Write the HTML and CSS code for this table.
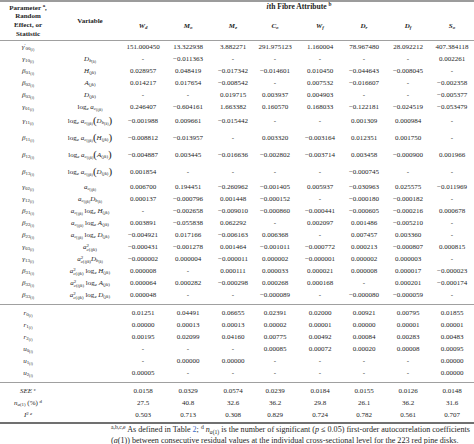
FILE: index.html
```html
<!DOCTYPE html>
<html>
<head>
<meta charset="utf-8">
<link rel="stylesheet" href="styles.css">
</head>
<body>
<table class="tbl">
<colgroup>
<col class="c-par"><col class="c-var"><col class="c-wd"><col class="c-mo"><col class="c-me"><col class="c-co"><col class="c-wf"><col class="c-dr"><col class="c-df"><col class="c-so">
</colgroup>
<thead>
<tr class="h1">
<th rowspan="2" class="hb par-h"><span class="hl">Parameter <sup>a</sup>,</span><span class="hl">Random</span><span class="hl">Effect, or</span><span class="hl">Statistic</span></th>
<th rowspan="2" class="hb">Variable</th>
<th colspan="8" class="grp"><i>i</i>th Fibre Attribute <sup>b</sup></th>
</tr>
<tr class="h2">
<th class="hb"><i>W</i><sub><i>d</i></sub></th>
<th class="hb"><i>M</i><sub><i>o</i></sub></th>
<th class="hb"><i>M</i><sub><i>e</i></sub></th>
<th class="hb"><i>C</i><sub><i>o</i></sub></th>
<th class="hb"><i>W</i><sub><i>f</i></sub></th>
<th class="hb"><i>D</i><sub><i>r</i></sub></th>
<th class="hb"><i>D</i><sub><i>f</i></sub></th>
<th class="hb"><i>S</i><sub><i>o</i></sub></th>
</tr>
</thead>
<tbody>
<tr><td><i>γ</i><sup>′</sup><sub>00<sub>(<i>i</i>)</sub></sub></td><td></td><td>151.000450</td><td>13.322938</td><td>3.882271</td><td>291.975123</td><td>1.160004</td><td>78.967480</td><td>28.092212</td><td>407.384118</td></tr>
<tr><td><i>γ</i><sub>10<sub>(<i>i</i>)</sub></sub></td><td><i>D</i><sub><i>b</i><sub>(<i>k</i>)</sub></sub></td><td>-</td><td>−0.011363</td><td>-</td><td>-</td><td>-</td><td>-</td><td>-</td><td>0.002261</td></tr>
<tr><td><i>β</i><sub>01<sub>(<i>i</i>)</sub></sub></td><td><i>H</i><sub>(<i>jk</i>)</sub></td><td>0.028957</td><td>0.048419</td><td>−0.017342</td><td>−0.014601</td><td>0.010450</td><td>−0.044643</td><td>−0.008045</td><td>-</td></tr>
<tr><td><i>β</i><sub>02<sub>(<i>i</i>)</sub></sub></td><td><i>A</i><sub>(<i>jk</i>)</sub></td><td>0.014217</td><td>0.017654</td><td>−0.008542</td><td>-</td><td>0.007532</td><td>−0.016607</td><td>-</td><td>−0.002358</td></tr>
<tr><td><i>β</i><sub>03<sub>(<i>i</i>)</sub></sub></td><td><i>D</i><sub>(<i>jk</i>)</sub></td><td>-</td><td>-</td><td>0.019715</td><td>0.003937</td><td>0.004903</td><td>-</td><td>-</td><td>−0.005377</td></tr>
<tr><td><i>γ</i><sub>01<sub>(<i>i</i>)</sub></sub></td><td>log<sub><i>e</i></sub> <i>a</i><sub><i>c</i><sub>(<i>ijk</i>)</sub></sub></td><td>0.246407</td><td>−0.604161</td><td>1.663382</td><td>0.160570</td><td>0.168033</td><td>−0.122181</td><td>−0.024519</td><td>−0.053479</td></tr>
<tr class="tl"><td><i>γ</i><sub>11<sub>(<i>i</i>)</sub></sub></td><td>log<sub><i>e</i></sub> <i>a</i><sub><i>c</i><sub>(<i>ijk</i>)</sub></sub><span class="bp">(</span><i>D</i><sub><i>b</i><sub>(<i>k</i>)</sub></sub><span class="bp">)</span></td><td>−0.001988</td><td>0.009661</td><td>−0.015442</td><td>-</td><td>-</td><td>0.001309</td><td>0.000984</td><td>-</td></tr>
<tr class="tl"><td><i>β</i><sub>11<sub>(<i>i</i>)</sub></sub></td><td>log<sub><i>e</i></sub> <i>a</i><sub><i>c</i><sub>(<i>ijk</i>)</sub></sub><span class="bp">(</span><i>H</i><sub>(<i>jk</i>)</sub><span class="bp">)</span></td><td>−0.008812</td><td>−0.013957</td><td>-</td><td>0.003320</td><td>−0.003164</td><td>0.012351</td><td>0.001750</td><td>-</td></tr>
<tr class="tl"><td><i>β</i><sub>12<sub>(<i>i</i>)</sub></sub></td><td>log<sub><i>e</i></sub> <i>a</i><sub><i>c</i><sub>(<i>ijk</i>)</sub></sub><span class="bp">(</span><i>A</i><sub>(<i>jk</i>)</sub><span class="bp">)</span></td><td>−0.004887</td><td>0.003445</td><td>−0.016636</td><td>−0.002802</td><td>−0.003714</td><td>0.003458</td><td>−0.000900</td><td>0.001966</td></tr>
<tr class="tl"><td><i>β</i><sub>13<sub>(<i>i</i>)</sub></sub></td><td>log<sub><i>e</i></sub> <i>a</i><sub><i>c</i><sub>(<i>ijk</i>)</sub></sub><span class="bp">(</span><i>D</i><sub>(<i>jk</i>)</sub><span class="bp">)</span></td><td>0.001854</td><td>-</td><td>-</td><td>-</td><td>-</td><td>−0.000745</td><td>-</td><td>-</td></tr>
<tr><td><i>γ</i><sub>02<sub>(<i>i</i>)</sub></sub></td><td><i>a</i><sub><i>c</i><sub>(<i>ijk</i>)</sub></sub></td><td>0.006700</td><td>0.194451</td><td>−0.260962</td><td>−0.001405</td><td>0.005937</td><td>−0.030963</td><td>0.025575</td><td>−0.011969</td></tr>
<tr><td><i>γ</i><sub>12<sub>(<i>i</i>)</sub></sub></td><td><i>a</i><sub><i>c</i><sub>(<i>ijk</i>)</sub></sub><i>D</i><sub><i>b</i><sub>(<i>k</i>)</sub></sub></td><td>0.000137</td><td>−0.000796</td><td>0.001448</td><td>−0.000152</td><td>-</td><td>−0.000180</td><td>−0.000182</td><td>-</td></tr>
<tr><td><i>β</i><sub>21<sub>(<i>i</i>)</sub></sub></td><td><i>a</i><sub><i>c</i><sub>(<i>ijk</i>)</sub></sub> log<sub><i>e</i></sub> <i>H</i><sub>(<i>jk</i>)</sub></td><td>-</td><td>−0.002658</td><td>−0.009010</td><td>−0.000860</td><td>−0.000441</td><td>−0.000605</td><td>−0.000216</td><td>0.000678</td></tr>
<tr><td><i>β</i><sub>22<sub>(<i>i</i>)</sub></sub></td><td><i>a</i><sub><i>c</i><sub>(<i>ijk</i>)</sub></sub> log<sub><i>e</i></sub> <i>A</i><sub>(<i>jk</i>)</sub></td><td>0.003891</td><td>−0.055838</td><td>0.062292</td><td>-</td><td>0.002097</td><td>0.001486</td><td>−0.005210</td><td>-</td></tr>
<tr><td><i>β</i><sub>23<sub>(<i>i</i>)</sub></sub></td><td><i>a</i><sub><i>c</i><sub>(<i>ijk</i>)</sub></sub> log<sub><i>e</i></sub> <i>D</i><sub>(<i>jk</i>)</sub></td><td>−0.004921</td><td>0.017166</td><td>−0.006163</td><td>0.006368</td><td>-</td><td>0.007457</td><td>0.003360</td><td>-</td></tr>
<tr><td><i>γ</i><sub>03<sub>(<i>i</i>)</sub></sub></td><td><i>a</i><span class="stk"><span class="su">2</span><span class="sb"><i>c</i>(<i>ijk</i>)</span></span></td><td>−0.000431</td><td>−0.001278</td><td>0.001464</td><td>−0.001011</td><td>−0.000772</td><td>0.000213</td><td>−0.000807</td><td>0.000815</td></tr>
<tr><td><i>γ</i><sub>13<sub>(<i>i</i>)</sub></sub></td><td><i>a</i><span class="stk"><span class="su">2</span><span class="sb"><i>c</i>(<i>ijk</i>)</span></span><i>D</i><sub><i>b</i><sub>(<i>k</i>)</sub></sub></td><td>−0.000002</td><td>0.000004</td><td>−0.000011</td><td>0.000002</td><td>−0.000001</td><td>0.000002</td><td>0.000003</td><td>-</td></tr>
<tr><td><i>β</i><sub>31<sub>(<i>i</i>)</sub></sub></td><td><i>a</i><span class="stk"><span class="su">2</span><span class="sb"><i>c</i>(<i>ijk</i>)</span></span> log<sub><i>e</i></sub> <i>H</i><sub>(<i>jk</i>)</sub></td><td>0.000008</td><td>-</td><td>0.000111</td><td>0.000033</td><td>0.000021</td><td>0.000008</td><td>0.000017</td><td>−0.000023</td></tr>
<tr><td><i>β</i><sub>32<sub>(<i>i</i>)</sub></sub></td><td><i>a</i><span class="stk"><span class="su">2</span><span class="sb"><i>c</i>(<i>ijk</i>)</span></span> log<sub><i>e</i></sub> <i>A</i><sub>(<i>jk</i>)</sub></td><td>0.000064</td><td>0.000282</td><td>−0.000298</td><td>0.000268</td><td>0.000168</td><td>-</td><td>0.000201</td><td>−0.000174</td></tr>
<tr class="end"><td><i>β</i><sub>33<sub>(<i>i</i>)</sub></sub></td><td><i>a</i><span class="stk"><span class="su">2</span><span class="sb"><i>c</i>(<i>ijk</i>)</span></span> log<sub><i>e</i></sub> <i>D</i><sub>(<i>jk</i>)</sub></td><td>0.000048</td><td>-</td><td>-</td><td>−0.000089</td><td>-</td><td>−0.000080</td><td>−0.000059</td><td>-</td></tr>
<tr class="sep"><td><i>r</i><sub>0<sub>(<i>i</i>)</sub></sub></td><td></td><td>0.01251</td><td>0.04491</td><td>0.06655</td><td>0.02391</td><td>0.02000</td><td>0.00921</td><td>0.00795</td><td>0.01855</td></tr>
<tr><td><i>r</i><sub>1<sub>(<i>i</i>)</sub></sub></td><td></td><td>0.00000</td><td>0.00013</td><td>0.00013</td><td>0.00002</td><td>0.00001</td><td>0.00000</td><td>0.00001</td><td>0.00001</td></tr>
<tr><td><i>r</i><sub>2<sub>(<i>i</i>)</sub></sub></td><td></td><td>0.00195</td><td>0.02099</td><td>0.04160</td><td>0.00775</td><td>0.00492</td><td>0.00084</td><td>0.00283</td><td>0.00483</td></tr>
<tr><td><i>u</i><sub>0<sub>(<i>i</i>)</sub></sub></td><td></td><td>-</td><td>-</td><td>-</td><td>0.00085</td><td>0.00072</td><td>0.00020</td><td>0.00008</td><td>0.00095</td></tr>
<tr><td><i>u</i><sub>1<sub>(<i>i</i>)</sub></sub></td><td></td><td>-</td><td>0.00000</td><td>0.00000</td><td>-</td><td>-</td><td>-</td><td>-</td><td>0.00000</td></tr>
<tr class="end"><td><i>u</i><sub>2<sub>(<i>i</i>)</sub></sub></td><td></td><td>0.00005</td><td>-</td><td>-</td><td>-</td><td>-</td><td>-</td><td>-</td><td>0.00000</td></tr>
<tr class="sep"><td><i>SEE</i> <sup>c</sup></td><td></td><td>0.0158</td><td>0.0329</td><td>0.0574</td><td>0.0239</td><td>0.0184</td><td>0.0155</td><td>0.0126</td><td>0.0148</td></tr>
<tr><td><i>n</i><sub><i>a</i>(1)</sub> (%) <sup>d</sup></td><td></td><td>27.5</td><td>40.8</td><td>32.6</td><td>36.2</td><td>29.8</td><td>26.1</td><td>36.2</td><td>31.6</td></tr>
<tr class="last"><td><i>I</i><sup>2 <i>e</i></sup></td><td></td><td>0.503</td><td>0.713</td><td>0.308</td><td>0.829</td><td>0.724</td><td>0.782</td><td>0.561</td><td>0.707</td></tr>
</tbody>
</table>
<div class="foot">
<div class="fl"><sup>a,b,c,e</sup> As defined in Table <span class="lnk">2</span>; <sup>d</sup> <i>n</i><sub><i>a</i>(1)</sub> is the number of significant (<i>p</i> ≤ 0.05) first-order autocorrelation coefficients</div>
<div class="fl">(<i>a</i>(1)) between consecutive residual values at the individual cross-sectional level for the 223 red pine disks.</div>
</div>
</body>
</html>
```
FILE: styles.css
```css
html, body {
  margin: 0;
  padding: 0;
  background: #fff;
}
body {
  width: 474px;
  height: 444px;
  overflow: hidden;
  font-family: "Liberation Serif", "Times New Roman", serif;
  font-size: 7px;
  color: #1e1e1e;
}
.tbl {
  border-collapse: separate;
  border-spacing: 0;
  table-layout: fixed;
  width: 474px;
  border-top: 2px solid #9c9c9c;
  border-bottom: 2px solid #707070;
}
.c-par { width: 56px; }
.c-var { width: 68px; }
.c-wd { width: 38px; }
.c-mo { width: 52px; }
.c-me { width: 38px; }
.c-co { width: 46px; }
.c-wf { width: 44px; }
.c-dr { width: 44px; }
.c-df { width: 44px; }
.c-so { width: 44px; }

.tbl td, .tbl th {
  padding: 0;
  text-align: center;
  vertical-align: middle;
  white-space: nowrap;
  line-height: 12px;
  font-weight: normal;
}
.tbl th { font-weight: bold; }
.h1 .grp { line-height: 10px; font-size: 7.6px; }
.h2 th { line-height: 28px; }
.hb { border-bottom: 1px solid #a0a0a0; }
.par-h { line-height: 8.7px !important; }
.hl { display: block; }

.tl td { line-height: 17px; }
.end td { padding-bottom: 3px; }
.sep td { border-top: 1px solid #a0a0a0; padding-top: 2px; }
.last td { padding-bottom: 1px; }

sub, sup {
  font-size: 70%;
  line-height: 0;
  position: relative;
  vertical-align: baseline;
}
sub { top: 0.3em; }
sup { top: -0.5em; }
sub sub { font-size: 80%; top: 0.25em; }

.bp {
  font-size: 11px;
  line-height: 0;
  position: relative;
  top: 0.5px;
}
.stk {
  display: inline-block;
  font-size: 4.9px;
  line-height: 4.5px;
  vertical-align: -2px;
  text-align: left;
}
.su, .sb { display: block; }

.foot {
  padding-left: 111px;
  font-size: 8.1px;
  line-height: 11px;
  white-space: nowrap;
  color: #1e1e1e;
}
.lnk { color: #3a6bc9; }
```
